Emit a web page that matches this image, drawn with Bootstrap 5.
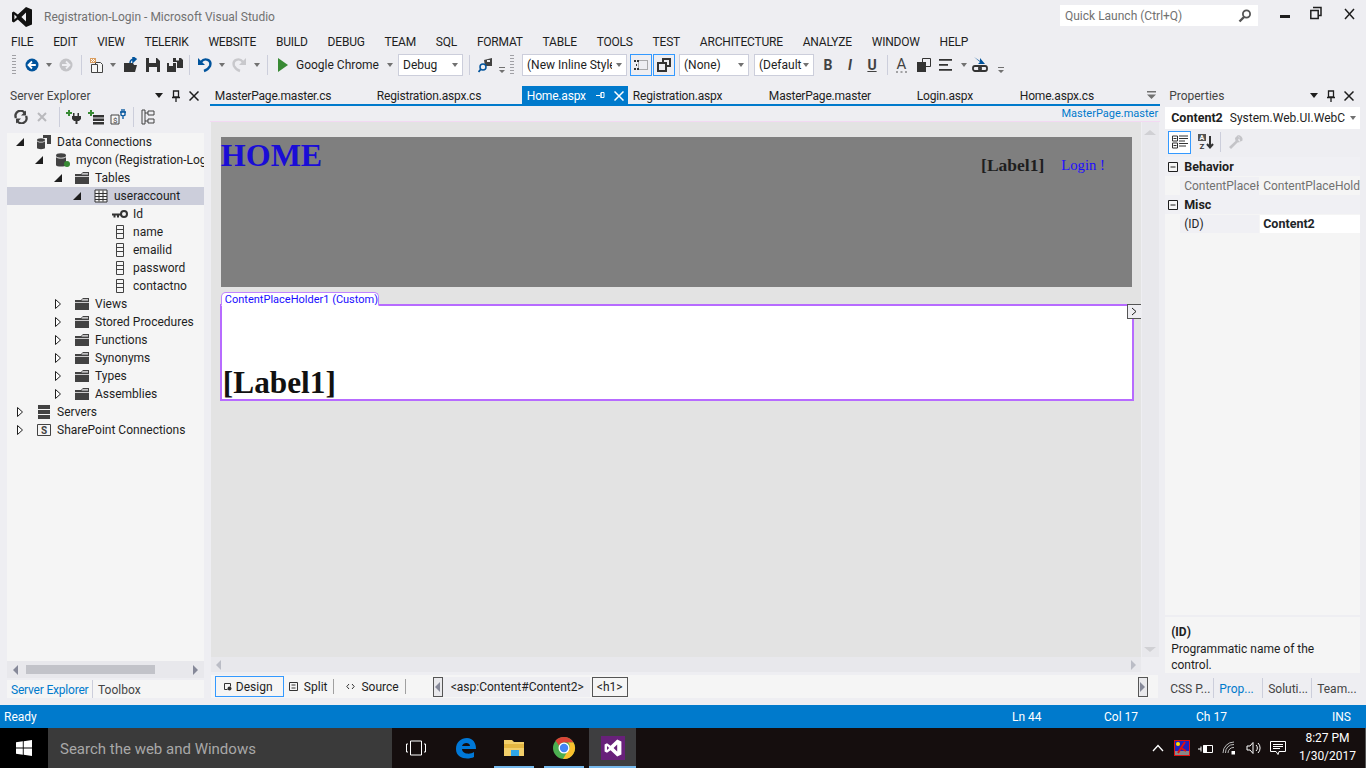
<!DOCTYPE html>
<html lang="en"><head><meta charset="utf-8"><title>Registration-Login - Microsoft Visual Studio</title>
<link href="https://cdn.jsdelivr.net/npm/bootstrap@5.3.0/dist/css/bootstrap.min.css" rel="stylesheet">
<style>
html,body{height:768px;overflow:hidden}
body{background:#eeeef2;color:#1e1e1e;font-family:Roboto,"Open Sans",sans-serif;font-size:12px;line-height:16px;width:1366px}
svg{display:block;flex:none}
.vs-title{height:32px}
.vs-logo{margin:7px 12px 0 12px}
.vs-name{margin-top:9px;color:#717171;font-size:12px}
.vs-ql{width:198px;height:21px;margin:5px 0 0 0;background:#fff;color:#717171;padding:0 6px 0 5px}
.vs-wb{margin:6px 11px 0 22px}
.wb2{margin-left:19px}.wb3{margin-left:22px}
.vs-menu{height:20px;padding-left:11px;gap:19.8px;font-size:12px;letter-spacing:-.2px}
.vs-tool{height:26px;padding:2px 0 0 12px}
.vs-tool>*{flex:none;display:flex;align-items:center;justify-content:center;height:22px}
.grip{width:4px;background-image:radial-gradient(#a0a0a5 .7px,transparent .8px);background-size:2px 3px}
.t6{width:6px}.t8{width:8px}.t10{width:10px}.t12{width:12px}.t14{width:14px}.t18{width:18px}.t20{width:20px}.t22{width:22px}.t26{width:26px}
.ml2{margin-left:2px}.ml3{margin-left:3px}.ml1{margin-left:1px}.ml4{margin-left:4px}.ml5{margin-left:5px}.ml6{margin-left:6px}.ml7{margin-left:7px}
.vsep{width:1px;height:20px;background:#cccedb}
.ddn{width:0;height:0;border:3px solid transparent;border-top:4px solid #717171;border-bottom:0}
.combo{background:#fff;border:1px solid #cccedb;padding:0 4px;justify-content:space-between!important;white-space:nowrap;overflow:hidden}
.cw65{width:65px}.cw105{width:105px}.cw70{width:70px}.cw60{width:60px}
.cmb-t{overflow:hidden;white-space:nowrap;min-width:0}
.togg{border:1px solid #3399ff;background:#eeeef2}
.gc{width:89px}
.fmt-b{font-size:14px;color:#424242}
.ovf{margin-top:9px}
.vs-main{height:619px;margin-top:8px}
.pane-l{width:207px;padding-left:7px}
.pane-c{width:951px;margin-left:3px}
.pane-r{width:201px;margin-left:5px}
.p-head{height:19px;padding-right:8px;color:#444}
.pane-r .p-head{padding-right:12px}
.p-head .ptitle{white-space:nowrap}
.p-head .ddn{border-width:4px;border-top-width:5px;border-bottom-width:0;border-top-color:#1e1e1e}
.dots{flex:1;height:5px;margin:0 8px;background-image:radial-gradient(#a8a8ad .6px,transparent .7px);background-size:2px 2px}
.pl-head{margin-left:3px}
.pl-tool{height:27px;margin-top:1px;padding-left:7px;margin-left:-7px}
.pl-tool>*{flex:none;display:flex;align-items:center;justify-content:center;height:22px}
.tree{width:197px;height:528px;background:#f5f5f5;overflow:hidden}
.trow{height:18px;white-space:nowrap;overflow:hidden;display:flex;align-items:center}
.trow.sel{background:#cccedb}
.l0{padding-left:7px}.l1{padding-left:26px}.l2{padding-left:45px}.l3{padding-left:64px}.l4{padding-left:105px}
.arr{width:12px;height:12px;margin-right:10px}
.tic{width:16px;height:16px;margin-right:5px}
.sb-h{height:17px;width:197px;background:#e8e8ec;padding:0 6px}
.sb-thumb{height:9px;width:129px;margin:0 4px 0 8px;background:#c2c3c9}
.tri-l{width:0;height:0;border:5px solid transparent;border-left:0;border-right:5px solid #868999}
.tri-r{width:0;height:0;border:5px solid transparent;border-right:0;border-left:5px solid #868999}
.hsb .tri-l,.hsb .tri-r{opacity:.45}
.tri-u{width:0;height:0;border:6px solid transparent;border-top:0;border-bottom:5px solid #d0d0d4}
.tri-d{width:0;height:0;border:6px solid transparent;border-bottom:0;border-top:5px solid #d0d0d4}
.pbt{height:18px;margin-top:2px;width:197px;background:#f5f5f5;color:#444;line-height:20px}
.pbt>div{white-space:nowrap}
.pbt-a{width:86px;padding-left:4px;border-right:1px solid #cccedb;letter-spacing:-.2px}
.pbt-b{padding-left:5px}
.blue-t{color:#007acc}
.c-tabs{height:18px;white-space:nowrap;color:#1e1e1e;letter-spacing:-.2px}
.c-tabs>div{padding:1px 0 0 5px;height:18px;display:flex;align-items:center}
.c1{width:162px}.c2{width:150px}.ca{width:106px;background:#007acc;color:#fff;justify-content:space-between;padding-right:4px!important}.c4{width:136px}.c5{width:148px}.c6{width:103px}.c7{flex:1}
.c-line{height:2px;background:#007acc}
.c-link{height:16px;text-align:right;color:#007acc;padding-right:2px;font-size:11px;line-height:15px;border-bottom:1px solid #f3d9f3}
.c-body{height:535px}
.surf{width:930px;margin-left:1px;background:#e3e3e3;padding:15px 0 0 10px;position:relative;overflow:hidden}
.hdr-box{width:911px;height:150px;background:#7f7f7f;font-family:"Liberation Serif",serif}
.hdr-h{color:#1a0dd6;font-size:32px;font-weight:700;line-height:37px}
.hdr-side{margin:18px 27px 0 0;gap:17px;line-height:21px}
.hdr-lab{font-weight:700;font-size:17.5px;color:#1e1e1e}
.hdr-lnk{font-size:14.67px;color:#1e0dff}
.ph-tag{margin:5px 0 -2px 0;height:14px;width:158px;border:1px solid #c084ff;border-bottom:1px solid #fff;border-radius:5px 5px 0 0;background:#fff;color:#1a0dff;font-size:11px;line-height:14px;padding-left:3px;white-space:nowrap;position:relative;z-index:1;overflow:hidden}
.ph-box{width:914px;height:97px;margin-left:-1px;border:2px solid #b76bff;background:#fff;font-family:"Liberation Serif",serif;font-size:31.3px;font-weight:700;line-height:37px;color:#111;padding:58px 0 0 1px}
.ph-btn{position:absolute;left:916px;top:182px;width:15px;height:15px;border:1px solid #555;background:#eeeef2}
.vsb{width:17px;margin-left:1px;background:#e8e8ec}
.vsb .tri-u{margin-top:8px}.vsb .tri-d{margin-bottom:5px}
.hsb{height:15px;margin-left:1px;width:930px;background:#e8e8ec;padding:0 5px}
.c-bot{height:23px;margin:3px 0 0 1px;width:947px;background:#f5f5f5;position:relative}
.dbtn{height:21px;display:flex;align-items:center;white-space:nowrap}
.d-act{width:69px;margin-left:4px;border:1px solid #3399ff;padding-left:7px;gap:3px;background:#f5f5f5}
.d-split{margin-left:5px;gap:6px}
.d-src{margin-left:12px;gap:6px}
.sep16{width:1px;height:15px;background:#a0a0a0}
.sp5{margin-left:6px}.sp6{margin-left:6px}
.nv{width:10px;height:20px;border:1px solid #555;display:flex;align-items:center;justify-content:center;background:#e9e9ec}
.nv1{margin-left:27px}.nv2{margin-right:10px}
.crumb{padding:0 6px 0 8px;background:#eeeef2;height:20px;line-height:20px;color:#222;white-space:nowrap}
.crumb2{border:1px solid #555;height:20px;padding:0 4px;line-height:18px;white-space:nowrap;margin-left:2px;background:#f5f5f5}
.obj-row{height:22px;background:#fff;margin-top:2px;padding-left:6px;white-space:nowrap;width:195px}
.obj-b{font-size:12.5px;margin-right:7px}
.obj-d{margin:0 4px 0 5px}
.prop-tb{height:26px;padding-left:3px;gap:3px;width:195px}
.ptb{width:23px;height:23px;display:flex;align-items:center;justify-content:center}
.ptb.on{border:1px solid #3399ff;background:#fff}
.pgrid{height:458px;width:195px;background:#f5f5f5;overflow:hidden;margin-top:2px}
.prow{height:19px;display:flex;align-items:center;white-space:nowrap;overflow:hidden}
.pcat{font-weight:700;font-size:12.5px;padding-left:3px;gap:6px;background:#f0f0f4}
.pname{width:79px;margin-left:15px;color:#717171;overflow:hidden;background:#f0f0f4;height:18px;line-height:18px;padding-left:4px}
.pval{flex:1;overflow:hidden;color:#717171;padding-left:3px;background:#f5f5f5;height:18px;line-height:18px;margin-left:1px}
.pval-b{font-size:12.5px}
.pdesc{height:56px;width:195px;margin-top:2px;background:#f5f5f5;padding:7px 6px 0;line-height:16px;color:#1e1e1e}
.pdesc b{display:block;margin-bottom:1px}
.rtabs{height:20px;margin-top:5px;color:#444;width:196px}
.rtabs>div{width:49px;padding-left:5px;white-space:nowrap;border-right:1px solid #cccedb;height:20px;line-height:22px}
.rtabs>div:last-child{border-right:0}
.vs-status{height:23px;background:#007acc;color:#fff;line-height:25px}
.st-ready{margin-left:4px;width:1008px}.st-ln{width:92px}.st-col{width:92px}.st-ch{width:136px}
.task{height:40px;background:#150e0e;color:#fff}
.t-start{width:48px;background:#000}
.t-search{width:344px;background:#3a3a3a;color:#a8a8a8;font-size:15px;padding-left:12px;line-height:42px}
.t-app{width:48px;height:40px}
.t-edge{margin-left:2px}.t-chr{margin-left:2px}
.t-ul{background:linear-gradient(#76b9ed,#76b9ed) center bottom/40px 2px no-repeat}
.t-act{width:47px;margin-left:1px;background:linear-gradient(#76b9ed,#76b9ed) center bottom/100% 2px no-repeat #3e3e40}
.t-tray{margin-left:auto}
.clock{width:76px;text-align:center;line-height:18px;color:#fff;font-size:12px;border-right:1px solid #555;height:40px;padding-top:1px}
.trayi{width:24px;height:40px}
</style></head><body>
<svg width="0" height="0" class="position-absolute"><defs>
<symbol id="folder" viewBox="0 0 16 16"><path d="M1 4l0 10h14V2H9L7 4z" fill="#424242"/><path d="M8.500 3.200h5.500v1.200H7.500z" fill="#f0eff1"/><path d="M1 6h14v.8H1z" fill="#f0eff1"/></symbol>
<symbol id="colm" viewBox="0 0 16 16"><path d="M4.500 1.500h7v13h-7zM4.500 5.500h7M4.500 9.500h7" fill="#f6f6f6" stroke="#424242" stroke-width="1"/></symbol>
<symbol id="ex" viewBox="0 0 12 12"><path d="M2 10L10 10L10 2z" fill="#1e1e1e"/></symbol>
<symbol id="col" viewBox="0 0 12 12"><path d="M3.500 1.500L8.500 6L3.500 10.500z" fill="#fff" stroke="#1e1e1e" stroke-width="1"/></symbol>
<symbol id="ovfl" viewBox="0 0 8 8"><path d="M1 1h6v1H1zM1 4h6L4 7z" fill="#717171"/></symbol>
</defs></svg>

<div class="vs-title d-flex">
 <svg class="vs-logo" width="20" height="20" viewBox="0 0 20 20"><path d="M14 0l6 2.400v15.200L14 20 5.800 12.600 1.800 15.600 0 14.600V5.400l1.800-1 4 3zM14 5.600L9.400 10l4.600 4.400zM2.400 7.400v5.200L5 10z" fill="#111" fill-rule="evenodd"/></svg>
 <div class="vs-name">Registration-Login - Microsoft Visual Studio</div>
 <div class="ms-auto d-flex">
  <div class="vs-ql d-flex align-items-center justify-content-between"><span>Quick Launch (Ctrl+Q)</span>
   <svg width="14" height="14" viewBox="0 0 14 14"><circle cx="8.500" cy="5" r="3.600" fill="none" stroke="#555" stroke-width="1.800"/><path d="M6 8L1.500 12.500" stroke="#555" stroke-width="2.400"/></svg></div>
  <div class="vs-wb d-flex">
   <svg width="11" height="16" viewBox="0 0 11 16"><path d="M0 9h10v3H0z" fill="#1e1e1e"/></svg>
   <svg class="wb2" width="12" height="16" viewBox="0 0 12 16"><path d="M3 1.500h8v8H8.500M.8 4.500h7.400v8H.8z" fill="none" stroke="#1e1e1e" stroke-width="1.500"/></svg>
   <svg class="wb3" width="11" height="16" viewBox="0 0 11 16"><path d="M1 3l9 10M10 3L1 13" stroke="#1e1e1e" stroke-width="1.500"/></svg>
  </div>
 </div>
</div>

<div class="vs-menu d-flex align-items-center">
 <span>FILE</span><span>EDIT</span><span>VIEW</span><span>TELERIK</span><span>WEBSITE</span><span>BUILD</span><span>DEBUG</span><span>TEAM</span><span>SQL</span><span>FORMAT</span><span>TABLE</span><span>TOOLS</span><span>TEST</span><span>ARCHITECTURE</span><span>ANALYZE</span><span>WINDOW</span><span>HELP</span>
</div>

<div class="vs-tool d-flex">
 <div class="grip"></div>
 <div class="t20 ml6"><svg width="14" height="14" viewBox="0 0 14 14"><circle cx="7" cy="7" r="6.500" fill="#00539c"/><path d="M7 3.500L3.500 7 7 10.500M3.800 7h7" fill="none" stroke="#fff" stroke-width="1.800"/></svg></div>
 <div class="t14"><i class="ddn"></i></div>
 <div class="t20"><svg width="14" height="14" viewBox="0 0 14 14"><circle cx="7" cy="7" r="6.500" fill="#c3c3c7"/><path d="M7 3.500L10.500 7 7 10.500M10 7h-7" fill="none" stroke="#eeeef2" stroke-width="1.800"/></svg></div>
 <div class="t10"><i class="vsep"></i></div>
 <div class="t20"><svg width="16" height="16" viewBox="0 0 16 16"><path d="M7.500 5.500h5l2 2v8h-7z" fill="#f6f6f6" stroke="#424242"/><path d="M3.500 7.500h6v8h-6z" fill="#f6f6f6" stroke="#424242"/><path d="M2 1h6v5H2z" fill="#d48a3c" opacity=".8"/><path d="M3 2h1v1H3zM5 2h1v1H5zM4 3h1v1H4zM6 3h1v1H6zM3 4h1v1H3zM5 4h1v1H5z" fill="#fff"/></svg></div>
 <div class="t14"><i class="ddn"></i></div>
 <div class="t22"><svg width="16" height="16" viewBox="0 0 16 16"><path d="M1 6h9l1 2h3l-2 7H1z" fill="#333"/><path d="M7 6C7 3 9 2 12 2M10 0l3 2-3 3z" fill="none" stroke="#00539c" stroke-width="1.500"/></svg></div>
 <div class="t22"><svg width="14" height="14" viewBox="0 0 14 14"><path d="M0 0h11l3 3v11H0z" fill="#333"/><path d="M3 0h7v5H3zM3 9h8v5H3z" fill="#eeeef2"/></svg></div>
 <div class="t22"><svg width="16" height="14" viewBox="0 0 16 14"><path d="M0 5h9v9H0z" fill="#333"/><path d="M6 0h8l2 2v8h-6V4H6z" fill="#333"/><path d="M2 5h4v3H2zM9 0h3v2.500H9z" fill="#eeeef2"/></svg></div>
 <div class="t6"><i class="vsep"></i></div>
 <div class="t26"><svg width="16" height="16" viewBox="0 0 16 16"><path d="M4 5C8 0 15 3 13 9c-1 2-3 4-6 5" fill="none" stroke="#00539c" stroke-width="2.400"/><path d="M1 1v7h7z" fill="#00539c"/></svg></div>
 <div class="t8"><i class="ddn"></i></div>
 <div class="t26"><svg width="16" height="16" viewBox="0 0 16 16"><path d="M12 5C8 0 1 3 3 9c1 2 3 4 6 5" fill="none" stroke="#c8c8cc" stroke-width="2.400"/><path d="M15 1v7H8z" fill="#c8c8cc"/></svg></div>
 <div class="t10"><i class="ddn"></i></div>
 <div class="t10"><i class="vsep"></i></div>
 <div class="t22"><svg width="12" height="14" viewBox="0 0 12 14"><path d="M1 0l10 7-10 7z" fill="#388a34"/></svg></div>
 <div class="gc ml2 justify-content-start">Google Chrome</div>
 <div class="t10"><i class="ddn"></i></div>
 <div class="combo cw65 ml3"><span class="cmb-t">Debug</span><i class="ddn"></i></div>
 <div class="t12"><i class="vsep"></i></div>
 <div class="t22"><svg width="16" height="16" viewBox="0 0 16 16"><path d="M6 3l8-2v8H7z" fill="#424242"/><path d="M9 3h3v2H9z" fill="#eeeef2"/><circle cx="5" cy="10" r="3" fill="none" stroke="#00539c" stroke-width="1.500"/><path d="M3 12l-2.500 3" stroke="#00539c" stroke-width="1.800"/></svg></div>
 <div class="t10"><svg class="ovf" width="8" height="8"><use href="#ovfl"/></svg></div>
 <div class="t10"><div class="grip h-100"></div></div>
 <div class="combo cw105 ml5"><span class="cmb-t">(New Inline Style</span><i class="ddn ms-1"></i></div>
 <div class="togg t22 ml3"><svg width="16" height="14" viewBox="0 0 16 14"><path d="M5.500 2.500h9v9h-9z" fill="none" stroke="#666" stroke-dasharray="1 1"/><path d="M1 2h2v2H1zM4 2h2v2H4zM1 10h2v2H1zM4 10h2v2H4zM3 6h1v2H3z" fill="#333"/></svg></div>
 <div class="togg ml1 t22"><svg width="14" height="14" viewBox="0 0 14 14"><path d="M6 4V1h7v7h-3" fill="none" stroke="#333" stroke-width="2"/><path d="M1 5h8v8H1z" fill="none" stroke="#333" stroke-width="2"/></svg></div>
 <div class="combo cw70 ml4"><span class="cmb-t">(None)</span><i class="ddn"></i></div>
 <div class="combo cw60 ml5"><span class="cmb-t">(Default</span><i class="ddn"></i></div>
 <div class="t22 ml3 fw-bold fmt-b">B</div>
 <div class="t22 fst-italic fw-bold fmt-b">I</div>
 <div class="t22 fw-bold text-decoration-underline fmt-b">U</div>
 <div class="t8"><i class="vsep"></i></div>
 <div class="t22"><svg width="14" height="16" viewBox="0 0 14 16"><text x="1.500" y="12" font-family="Roboto" font-size="15" fill="#424242">A</text><path d="M1 15h2M5.500 15h2M10 15h2" stroke="#555"/></svg></div>
 <div class="t22"><svg width="14" height="14" viewBox="0 0 14 14"><path d="M5.500.5h8v8h-8z" fill="#eeeef2" stroke="#333"/><path d="M0 4h9v10H0z" fill="#333"/></svg></div>
 <div class="t22"><svg width="14" height="14" viewBox="0 0 14 14"><path d="M0 1h13v1.800H0zM0 6h9v1.800H0zM0 11h13v1.800H0z" fill="#333"/></svg></div>
 <div class="t14"><i class="ddn"></i></div>
 <div class="t18"><svg width="16" height="18" viewBox="0 0 16 18"><path d="M2 1l6 4V2l5 6H6l2-2z" fill="#00539c"/><rect x="1" y="10" width="8" height="5" rx="2" fill="none" stroke="#333" stroke-width="1.800"/><rect x="7" y="10" width="8" height="5" rx="2" fill="none" stroke="#333" stroke-width="1.800"/></svg></div>
 <div class="t10 ml7"><svg class="ovf" width="8" height="8"><use href="#ovfl"/></svg></div>
</div>

<div class="vs-main d-flex">
 <div class="pane-l">
  <div class="p-head d-flex align-items-center pl-head"><span class="ptitle">Server Explorer</span><i class="dots"></i>
   <i class="ddn me-2"></i>
   <svg class="me-2" width="10" height="12" viewBox="0 0 10 12"><path d="M2.500 1h5v6h-5zM1 7.500h8M5 8v4" fill="none" stroke="#1e1e1e" stroke-width="1.300"/></svg>
   <svg width="10" height="10" viewBox="0 0 10 10"><path d="M.5.500l9 9M9.500.500l-9 9" stroke="#1e1e1e" stroke-width="1.500"/></svg></div>
  <div class="pl-tool d-flex">
   <div class="t20 ms-1"><svg width="14" height="14" viewBox="0 0 14 14"><path d="M2 8A5 5 0 0 1 11 3.500M12 6a5 5 0 0 1-9 4.500" fill="none" stroke="#424242" stroke-width="2.400"/><path d="M12 .5v5H7zM2 13.500v-5h5z" fill="#424242"/></svg></div>
   <div class="t22"><svg width="10" height="10" viewBox="0 0 10 10"><path d="M1 1l8 8M9 1L1 9" stroke="#b9b9bd" stroke-width="2"/></svg></div>
   <div class="t8 ml2"><i class="vsep"></i></div>
   <div class="t22"><svg width="16" height="16" viewBox="0 0 16 16"><path d="M0 3h2V1h2v2h2v2H4v2H2V5H0z" fill="#388a34"/><path d="M7 4h1.500v3h3V4H13v3h2v3l-2 2h-1.500v3h-2v-3H8l-2-2V7h1z" fill="#333"/></svg></div>
   <div class="t22"><svg width="16" height="16" viewBox="0 0 16 16"><path d="M0 3h2V1h2v2h2v2H4v2H2V5H0z" fill="#388a34"/><path d="M5 6h11v2.500H5zM5 9.500h11V12H5zM5 13h11v2.500H5z" fill="#333"/></svg></div>
   <div class="t22"><svg width="16" height="16" viewBox="0 0 16 16"><path d="M1 6h8v9H1z" fill="#f6f6f6" stroke="#424242"/><text x="3" y="13.500" font-family="Roboto" font-size="8" fill="#424242">$</text><path d="M10 3h6M12 0v3M14 0v3M11 3v3l2 1 2-1V3M13 7v3" fill="none" stroke="#00539c" stroke-width="1.300"/></svg></div>
   <div class="t8"><i class="vsep"></i></div>
   <div class="t22"><svg width="14" height="16" viewBox="0 0 14 16"><path d="M1 1h3v14H1zM4 4h3M4 12h3M7 2h6v4H7zM7 10h6v4H7z" fill="none" stroke="#424242"/></svg></div>
  </div>
  <div class="tree">
   <div class="trow l0"><svg class="arr"><use href="#ex"/></svg><svg class="tic" viewBox="0 0 16 16"><ellipse cx="5" cy="6" rx="4" ry="1.800" fill="#424242"/><path d="M1 7v7c0 1.500 8 1.500 8 0V7c-1 2-7 2-8 0z" fill="#424242"/><path d="M7 1h8v9h-4V4H7z" fill="#424242"/></svg>Data Connections</div>
   <div class="trow l1"><svg class="arr"><use href="#ex"/></svg><svg class="tic" viewBox="0 0 16 16"><ellipse cx="6" cy="3.500" rx="5" ry="2.200" fill="#424242"/><path d="M1 5v8c0 2 10 2 10 0V5C10 7 2 7 1 5z" fill="#424242"/><circle cx="12" cy="12" r="3" fill="#388a34"/></svg>mycon (Registration-Login)</div>
   <div class="trow l2"><svg class="arr"><use href="#ex"/></svg><svg class="tic"><use href="#folder"/></svg>Tables</div>
   <div class="trow l3 sel"><svg class="arr"><use href="#ex"/></svg><svg class="tic" viewBox="0 0 16 16"><path d="M2 2h12v12H2z" fill="#f6f6f6" stroke="#333"/><path d="M2 5.500h12M2 8.500h12M2 11.500h12M6 2.500v11M10 2.500v11" stroke="#333"/></svg>useraccount</div>
   <div class="trow l4"><svg class="tic" viewBox="0 0 16 16"><path d="M0 7.500h9v2H7v2H5v-2H3.500v2h-2v-2H0z" fill="#333"/><circle cx="12" cy="8" r="3" fill="#f5f5f5" stroke="#333" stroke-width="2"/></svg>Id</div>
   <div class="trow l4"><svg class="tic"><use href="#colm"/></svg>name</div>
   <div class="trow l4"><svg class="tic"><use href="#colm"/></svg>emailid</div>
   <div class="trow l4"><svg class="tic"><use href="#colm"/></svg>password</div>
   <div class="trow l4"><svg class="tic"><use href="#colm"/></svg>contactno</div>
   <div class="trow l2"><svg class="arr"><use href="#col"/></svg><svg class="tic"><use href="#folder"/></svg>Views</div>
   <div class="trow l2"><svg class="arr"><use href="#col"/></svg><svg class="tic"><use href="#folder"/></svg>Stored Procedures</div>
   <div class="trow l2"><svg class="arr"><use href="#col"/></svg><svg class="tic"><use href="#folder"/></svg>Functions</div>
   <div class="trow l2"><svg class="arr"><use href="#col"/></svg><svg class="tic"><use href="#folder"/></svg>Synonyms</div>
   <div class="trow l2"><svg class="arr"><use href="#col"/></svg><svg class="tic"><use href="#folder"/></svg>Types</div>
   <div class="trow l2"><svg class="arr"><use href="#col"/></svg><svg class="tic"><use href="#folder"/></svg>Assemblies</div>
   <div class="trow l0"><svg class="arr"><use href="#col"/></svg><svg class="tic" viewBox="0 0 16 16"><path d="M2 1h12v4H2zM2 6h12v4H2zM2 11h12v4H2z" fill="#424242"/></svg>Servers</div>
   <div class="trow l0"><svg class="arr"><use href="#col"/></svg><svg class="tic" viewBox="0 0 16 16"><path d="M1.500 2.500h13v11h-13z" fill="#f6f6f6" stroke="#424242"/><text x="5" y="12" font-family="Roboto" font-size="10" font-weight="700" fill="#424242">S</text></svg>SharePoint Connections</div>
  </div>
  <div class="sb-h d-flex align-items-center"><i class="tri-l"></i><i class="sb-thumb"></i><i class="tri-r ms-auto"></i></div>
  <div class="pbt d-flex"><div class="blue-t pbt-a">Server Explorer</div><div class="pbt-b">Toolbox</div></div>
 </div>
 <div class="pane-c">
  <div class="c-tabs d-flex">
   <div class="c1">MasterPage.master.cs</div><div class="c2">Registration.aspx.cs</div>
   <div class="ca"><span>Home.aspx</span><span class="d-flex align-items-center gap-2"><svg width="10" height="10" viewBox="0 0 10 10"><path d="M5 2v5M2 4.500h2M8 1.500h-3v5h3zM0 4.500h2" fill="none" stroke="#fff"/></svg><svg width="10" height="10" viewBox="0 0 10 10"><path d="M.5.500l9 9M9.500.500l-9 9" stroke="#fff" stroke-width="1.500"/></svg></span></div>
   <div class="c4">Registration.aspx</div><div class="c5">MasterPage.master</div><div class="c6">Login.aspx</div><div class="c7 justify-content-between pe-1"><span>Home.aspx.cs</span><svg width="9" height="9" viewBox="0 0 9 9"><path d="M0 0h9v1.500H0zM0 3.500h9L4.500 8z" fill="#717171"/></svg></div>
  </div>
  <div class="c-line"></div>
  <div class="c-link">MasterPage.master</div>
  <div class="c-body d-flex">
   <div class="surf">
    <div class="hdr-box d-flex justify-content-between">
     <div class="hdr-h">HOME</div>
     <div class="hdr-side d-flex align-items-center align-self-start"><span class="hdr-lab">[Label1]</span><span class="hdr-lnk">Login !</span></div>
    </div>
    <div class="ph-tag">ContentPlaceHolder1 (Custom)</div>
    <div class="ph-box">[Label1]</div>
    <div class="ph-btn d-flex align-items-center justify-content-center"><svg width="7" height="9" viewBox="0 0 7 9"><path d="M1 1l4 3.500-4 3.500" fill="none" stroke="#1e1e1e"/></svg></div>
   </div>
   <div class="vsb d-flex flex-column justify-content-between align-items-center"><i class="tri-u"></i><i class="tri-d"></i></div>
  </div>
  <div class="hsb d-flex align-items-center"><i class="tri-l"></i><i class="tri-r ms-auto"></i></div>
  <div class="c-bot d-flex align-items-center">
   <div class="dbtn d-act"><svg width="10" height="10" viewBox="0 0 10 10"><path d="M1.500 1.500h6v3M1.500 1.500v6h3" fill="none" stroke="#333"/><circle cx="6.500" cy="6.500" r="2" fill="#333"/></svg>Design</div>
   <div class="dbtn d-split"><svg width="9" height="9" viewBox="0 0 9 9"><path d="M.5.500h8v8h-8zM2.500 3h4M2.500 6h4" fill="none" stroke="#333"/></svg>Split</div>
   <i class="sep16 sp5"></i>
   <div class="dbtn d-src"><svg width="9" height="9" viewBox="0 0 9 9"><path d="M3 2L.8 4.500 3 7M6 2l2.200 2.500L6 7" fill="none" stroke="#333"/></svg>Source</div>
   <i class="sep16 sp6"></i>
   <div class="nv nv1"><i class="tri-l"></i></div>
   <div class="crumb">&lt;asp:Content#Content2&gt;</div>
   <div class="crumb2">&lt;h1&gt;</div>
   <div class="nv ms-auto nv2"><i class="tri-r"></i></div>
  </div>
 </div>
 <div class="pane-r">
  <div class="p-head d-flex align-items-center"><span class="ptitle ms-1">Properties</span><i class="dots"></i>
   <i class="ddn me-2"></i>
   <svg class="me-2" width="10" height="12" viewBox="0 0 10 12"><path d="M2.500 1h5v6h-5zM1 7.500h8M5 8v4" fill="none" stroke="#1e1e1e" stroke-width="1.300"/></svg>
   <svg width="10" height="10" viewBox="0 0 10 10"><path d="M.5.500l9 9M9.500.500l-9 9" stroke="#1e1e1e" stroke-width="1.500"/></svg></div>
  <div class="obj-row d-flex align-items-center"><b class="obj-b">Content2</b><span class="flex-grow-1 overflow-hidden">System.Web.UI.WebControls.Content</span><i class="ddn obj-d"></i></div>
  <div class="prop-tb d-flex align-items-center">
   <div class="ptb on"><svg width="16" height="14" viewBox="0 0 16 14"><path d="M.5 1h5v5h-5zM.5 8h5v5h-5z" fill="none" stroke="#333"/><path d="M7 1h9M7 3.500h9M7 6h6M7 8.500h9M7 11h7M1.500 3.500h3M1.500 10.500h3" stroke="#333"/></svg></div>
   <div class="ptb"><svg width="16" height="16" viewBox="0 0 16 16"><path d="M0 0h8v7H0z" fill="#555"/><text x="1.500" y="6" font-family="Roboto" font-size="7" font-weight="700" fill="#fff">A</text><text x="1.500" y="15" font-family="Roboto" font-size="8" font-weight="700" fill="#333">Z</text><path d="M12 2v11M9 10l3 3.500 3-3.500" fill="none" stroke="#333" stroke-width="2"/></svg></div>
   <i class="vsep"></i>
   <div class="ptb"><svg width="16" height="16" viewBox="0 0 16 16"><path d="M10 1a4.500 4.500 0 0 1 4.500 5.500L12 8 10 6l1.500-2.500M10 1L7 4l.5 3L1 13l2 2 6.500-6.500 3-.5" fill="#c4c4c8"/></svg></div>
  </div>
  <div class="pgrid">
   <div class="prow pcat d-flex"><svg width="10" height="10" viewBox="0 0 10 10"><path d="M.5.500h9v9h-9zM2.500 5h5" fill="#f5f5f5" stroke="#1e1e1e"/></svg><span>Behavior</span></div>
   <div class="prow"><div class="pname">ContentPlaceHolderID</div><div class="pval">ContentPlaceHolder1</div></div>
   <div class="prow pcat d-flex"><svg width="10" height="10" viewBox="0 0 10 10"><path d="M.5.500h9v9h-9zM2.500 5h5" fill="#f5f5f5" stroke="#1e1e1e"/></svg><span>Misc</span></div>
   <div class="prow"><div class="pname text-body">(ID)</div><div class="pval pval-b text-body fw-bold bg-white">Content2</div></div>
  </div>
  <div class="pdesc"><b>(ID)</b>Programmatic name of the control.</div>
  <div class="rtabs d-flex"><div>CSS P...</div><div class="blue-t">Prop...</div><div>Soluti...</div><div>Team...</div></div>
 </div>
</div>

<div class="vs-status d-flex"><div class="st-ready">Ready</div><div class="st-ln">Ln 44</div><div class="st-col">Col 17</div><div class="st-ch">Ch 17</div><div>INS</div></div>

<div class="task d-flex align-items-center">
 <div class="t-start d-flex align-items-center justify-content-center h-100"><svg width="16" height="16" viewBox="0 0 16 16"><path d="M0 2.300L6.800 1.300V7.600H0zM7.700 1.200L16 0V7.600H7.700zM0 8.400H6.800V14.700L0 13.700zM7.700 8.400H16V16L7.700 14.800z" fill="#fff"/></svg></div>
 <div class="t-search h-100">Search the web and Windows</div>
 <div class="t-app d-flex align-items-center justify-content-center"><svg width="20" height="16" viewBox="0 0 20 16"><path d="M4.500 1h11v14h-11zM2 4H.5v8H2M18 4h1.500v8H18" fill="none" stroke="#fff" stroke-width="1"/></svg></div>
 <div class="t-app t-edge d-flex align-items-center justify-content-center"><svg width="22" height="22" viewBox="0 0 22 22"><path d="M1 12C1 5 6 1 12 1c6 0 9 5 9 11H7c0 5 8 6 12 3v5c-6 3-18 2-18-8zM7 9h8c0-4-7-4-8 0z" fill="#0078d7" fill-rule="evenodd"/></svg></div>
 <div class="t-app d-flex align-items-center justify-content-center t-ul"><svg width="22" height="22" viewBox="0 0 22 22"><path d="M1 3h8l2 2h10v14H1z" fill="#f2cf6a"/><path d="M1 7h20v4H1z" fill="#e4b742"/><path d="M8 13h8v6H8z" fill="#2fa6e6"/></svg></div>
 <div class="t-app t-chr d-flex align-items-center justify-content-center t-ul"><svg width="24" height="24" viewBox="0 0 24 24"><circle cx="12" cy="12" r="11" fill="#4caf50"/><path d="M12 1a11 11 0 0 1 9.500 5.500H12a5.500 5.500 0 0 0-5 3.300L3.500 4.500A11 11 0 0 1 12 1z" fill="#db4437"/><path d="M21.500 6.500A11 11 0 0 1 11 23l5-8.500a5.500 5.500 0 0 0 0-8z" fill="#fbc02d"/><circle cx="12" cy="12" r="5.500" fill="#fff"/><circle cx="12" cy="12" r="4.200" fill="#4285f4"/></svg></div>
 <div class="t-app t-act d-flex align-items-center justify-content-center"><svg width="24" height="24" viewBox="0 0 20 20"><path d="M0 0h20v20H0z" fill="#68217a"/><path d="M13.500 3l3.500 1.500v11L13.500 17 8 11.800 5 14l-2-1V7l2-1 3 2.200zM13.500 7l-3 3 3 3zM5 8.300v3.400L6.800 10z" fill="#fff" fill-rule="evenodd"/></svg></div>
 <div class="t-tray d-flex align-items-center">
  <div class="trayi d-flex align-items-center justify-content-center"><svg width="12" height="8" viewBox="0 0 12 8"><path d="M1 7l5-5.500L11 7" fill="none" stroke="#fff" stroke-width="1.300"/></svg></div>
  <div class="trayi d-flex align-items-center justify-content-center"><svg width="16" height="16" viewBox="0 0 16 16"><path d="M0 0h16v16H0z" fill="#e01010"/><path d="M1 1h14v14H1z" fill="#2020c0"/><path d="M1 11h14v4H1z" fill="#888"/><circle cx="4" cy="4" r="2" fill="#ffe000"/><path d="M11 2L7 8l-3 5M7 8l5 3" stroke="#e01010" stroke-width="2" fill="none"/></svg></div>
  <div class="trayi d-flex align-items-center justify-content-center"><svg width="16" height="14" viewBox="0 0 16 14"><path d="M5.500 4.500h9v7h-9zM0 8h3M3 5.500v5" fill="none" stroke="#fff"/><path d="M5 4.500h4v7H5z" fill="#fff"/></svg></div>
  <div class="trayi d-flex align-items-center justify-content-center"><svg width="16" height="14" viewBox="0 0 16 14"><path d="M1 12a11 11 0 0 1 11-11M3.500 12a8 8 0 0 1 8.500-8.500M6 12a5.500 5.500 0 0 1 6-5.500" fill="none" stroke="#bbb"/><path d="M9.500 10h3.500v3.500H9.500z" fill="#fff"/></svg></div>
  <div class="trayi d-flex align-items-center justify-content-center"><svg width="16" height="14" viewBox="0 0 16 14"><path d="M1 5h3l3-3.500v11L4 9H1zM10 4a4 4 0 0 1 0 6M12 2a7 7 0 0 1 0 10" fill="none" stroke="#fff"/></svg></div>
  <div class="trayi d-flex align-items-center justify-content-center"><svg width="16" height="16" viewBox="0 0 16 16"><path d="M.5 1.500h15v10H9l-1 3-2-3H.5zM3 4.500h10M3 6.500h10M3 8.500h7" fill="none" stroke="#fff"/></svg></div>
  <div class="clock"><div>8:27 PM</div><div>1/30/2017</div></div>
 </div>
</div>
<script src="https://cdn.jsdelivr.net/npm/bootstrap@5.3.0/dist/js/bootstrap.bundle.min.js"></script>
</body></html>
